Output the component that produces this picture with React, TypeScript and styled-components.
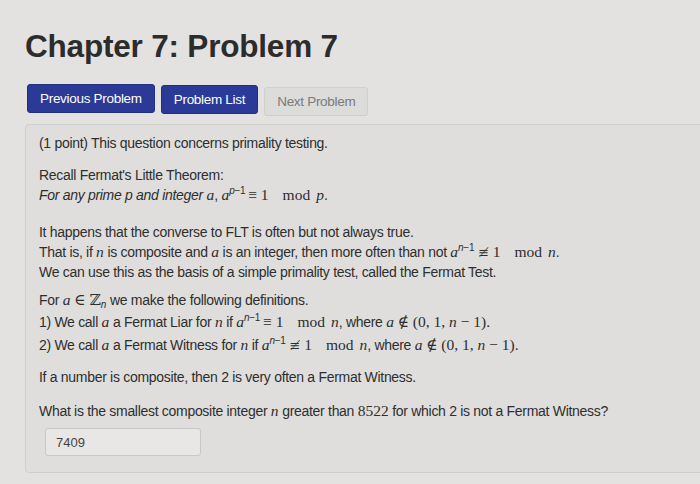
import styled, { createGlobalStyle } from 'styled-components'

const GlobalStyle = createGlobalStyle`
  html, body {
    margin: 0;
    padding: 0;
    background: #e3e2e0;
    overflow: hidden;
  }
  body {
    font-family: 'Liberation Sans', Arial, sans-serif;
    color: #333;
  }
`

const Page = styled.div`
  width: 700px;
  height: 484px;
  padding: 27px 0 0 25px;
  box-sizing: border-box;
`

const Title = styled.h1`
  margin: 0;
  font-size: 31.5px;
  line-height: 38px;
  font-weight: 700;
  color: #2c2c2c;
  letter-spacing: -0.2px;
`

const Nav = styled.nav`
  display: flex;
  align-items: flex-start;
  gap: 6px;
  margin-top: 19px;
  margin-left: 2px;
`

const NavButton = styled.button<{ $disabled?: boolean; $drop?: number }>`
  height: 29px;
  padding: 0 12px;
  margin-top: ${({ $drop }) => $drop ?? 0}px;
  border-radius: 3px;
  font-family: 'Liberation Sans', Arial, sans-serif;
  font-size: 13.5px;
  letter-spacing: -0.3px;
  cursor: pointer;
  background: ${({ $disabled }) => ($disabled ? '#dcdcda' : '#2a3a96')};
  color: ${({ $disabled }) => ($disabled ? '#7a7a7a' : '#fff')};
  border: 1px solid ${({ $disabled }) => ($disabled ? '#cfcfcd' : '#22307e')};
`

const ProblemBox = styled.section`
  width: 720px;
  margin-top: 8px;
  padding: 8px 14px 16px 13px;
  box-sizing: border-box;
  background: #dfdedc;
  border: 1px solid #cfcecb;
  border-radius: 4px;
  font-size: 14px;
  letter-spacing: -0.3px;
  color: #2e2e2e;
`

const Para = styled.p<{ $top?: number }>`
  margin: ${({ $top }) => $top ?? 0}px 0 0;
  line-height: 20px;
`

const Line = styled.span<{ $h?: number }>`
  display: block;
  line-height: ${({ $h }) => $h ?? 20}px;
`

const Em = styled.span`
  font-style: italic;
`

const M = styled.span`
  font-family: 'Liberation Serif', 'DejaVu Serif', 'Times New Roman', serif;
  font-size: 15.5px;
  letter-spacing: 0;
`

const NotEq = styled.span`
  font-family: 'DejaVu Serif', serif;
  font-size: 13px;
  line-height: 0;
  margin: 0 4px 0 1px;
`

const V = styled.i`
  font-family: 'Liberation Serif', 'Times New Roman', serif;
  font-style: italic;
  font-size: 15.5px;
  letter-spacing: 0;
`

const Sup = styled.sup`
  font-size: 10px;
  line-height: 0;
  vertical-align: 6px;
  margin-right: 3px;
`

const Sub = styled.sub`
  font-size: 10px;
  line-height: 0;
  vertical-align: -3px;
  margin-right: 4px;
`

const Mod = styled.span`
  font-family: 'Liberation Serif', 'Times New Roman', serif;
  font-size: 15.5px;
  margin: 0 6px 0 14px;
  letter-spacing: 0;
`

const AnswerInput = styled.input`
  display: block;
  width: 156px;
  height: 28px;
  margin: 7px 0 0 6px;
  padding: 0 10px;
  box-sizing: border-box;
  border: 1px solid #c9c8c5;
  border-radius: 3px;
  background: #e8e7e5;
  font-family: 'Liberation Sans', Arial, sans-serif;
  font-size: 13px;
  color: #444;
`

const Power = ({ base, exp }: { base: string; exp: string }) => (
  <>
    <V>{base}</V>
    <Sup>
      <i>{exp}</i>−1
    </Sup>
  </>
)

const NotCongruent = () => (
  <>
    <NotEq>≢</NotEq>
    <M>1</M>
  </>
)

const NotIn = () => (
  <>
    <V>a</V> <M>∉ (0, 1, </M>
    <V>n</V>
    <M> − 1).</M>
  </>
)

export default function App() {
  return (
    <>
      <GlobalStyle />
      <Page>
        <Title>Chapter 7: Problem 7</Title>
        <Nav>
          <NavButton>Previous Problem</NavButton>
          <NavButton $drop={1}>Problem List</NavButton>
          <NavButton $disabled $drop={3}>
            Next Problem
          </NavButton>
        </Nav>
        <ProblemBox>
          <Para>(1 point) This question concerns primality testing.</Para>

          <Para $top={12}>
            <Line>Recall Fermat's Little Theorem:</Line>
            <Line>
              <Em>For any prime p and integer </Em>
              <V>a</V>, <Power base="a" exp="p" />
              <M>≡ 1</M>
              <Mod>mod</Mod>
              <V>p</V>.
            </Line>
          </Para>

          <Para $top={17}>
            <Line>It happens that the converse to FLT is often but not always true.</Line>
            <Line>
              That is, if <V>n</V> is composite and <V>a</V> is an integer, then more often
              than not <Power base="a" exp="n" />
              <NotCongruent />
              <Mod>mod</Mod>
              <V>n</V>.
            </Line>
            <Line>We can use this as the basis of a simple primality test, called the Fermat Test.</Line>
          </Para>

          <Para $top={8}>
            <Line>
              For <V>a</V> <M>∈ ℤ</M>
              <Sub>
                <i>n</i>
              </Sub>
              we make the following definitions.
            </Line>
            <Line $h={24}>
              1) We call <V>a</V> a Fermat Liar for <V>n</V> if <Power base="a" exp="n" />
              <M>≡ 1</M>
              <Mod>mod</Mod>
              <V>n</V>, where <NotIn />
            </Line>
            <Line $h={22}>
              2) We call <V>a</V> a Fermat Witness for <V>n</V> if <Power base="a" exp="n" />
              <NotCongruent />
              <Mod>mod</Mod>
              <V>n</V>, where <NotIn />
            </Line>
          </Para>

          <Para $top={11}>If a number is composite, then 2 is very often a Fermat Witness.</Para>

          <Para $top={14}>
            What is the smallest composite integer <V>n</V> greater than <M>8522</M> for which
            2 is not a Fermat Witness?
          </Para>

          <AnswerInput defaultValue="7409" readOnly />
        </ProblemBox>
      </Page>
    </>
  )
}
